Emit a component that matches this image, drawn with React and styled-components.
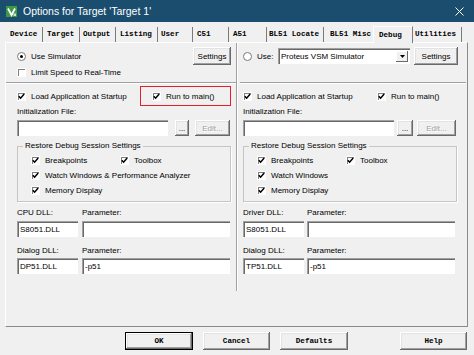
import React from "react"
import styled, { createGlobalStyle, css } from "styled-components"

const GlobalStyle = createGlobalStyle`
  body {
    margin: 0;
    background: #f0f0f0;
    font-family: "Liberation Sans", Arial, sans-serif;
    font-size: 8px;
    color: #000;
  }
`

const Window = styled.div`
  width: 474px;
  height: 355px;
  background: #f0f0f0;
  display: flex;
  flex-direction: column;
  overflow: hidden;
`

const TitleBar = styled.div`
  height: 22px;
  background: #1b4e6e;
  display: flex;
  align-items: center;
  padding: 0 10px 0 6px;
  color: #fff;
`

const Title = styled.span`
  margin-left: 6px;
  font-size: 10.5px;
  flex: 1;
`

const TabStrip = styled.div`
  height: 20px;
  display: flex;
  align-items: flex-end;
  padding-left: 5px;
`

const Tab = styled.div`
  box-sizing: border-box;
  width: ${p => p.$w}px;
  height: 15px;
  padding-left: ${p => p.$pad}px;
  font-family: "Liberation Mono", "Courier New", monospace;
  font-weight: bold;
  font-size: 7.6px;
  line-height: 15px;
  white-space: nowrap;
  border-right: 1px solid ${p => (p.$beforeActive ? "transparent" : "#7a7a7a")};
  ${p =>
    p.$active &&
    css`
      height: 17px;
      line-height: 17px;
      border-top: 1px solid #fff;
      border-left: 1px solid #fff;
      border-right: 1px solid #7a7a7a;
      margin-bottom: -1px;
      background: #f0f0f0;
      position: relative;
      z-index: 1;
    `}
`

const TabPage = styled.div`
  box-sizing: border-box;
  height: 285px;
  margin: 0 6px 0 5px;
  border-top: 1px solid #fff;
  border-left: 1px solid #fff;
  border-right: 1px solid #8a8a8a;
  border-bottom: 1px solid #8a8a8a;
`

const Columns = styled.div`
  display: grid;
  grid-template-columns: 230px 1fr;
  height: 248px;
`

const Panel = styled.div`
  display: flex;
  flex-direction: column;
  padding: 0 ${p => p.$padRight}px 0 ${p => p.$padLeft}px;
  ${p =>
    p.$divider &&
    css`
      border-left: 1px solid #a0a0a0;
      box-shadow: inset 1px 0 #fff;
    `}
`

const Row = styled.div`
  display: flex;
  align-items: center;
  height: ${p => p.$h}px;
  margin-top: ${p => p.$mt}px;
  gap: ${p => p.$gap || 0}px;
`

const Label = styled.span`
  white-space: nowrap;
  width: ${p => (p.$w ? `${p.$w}px` : "auto")};
  color: ${p => (p.$muted ? "#a0a0a0" : "#000")};
`

const Separator = styled.div`
  height: 1px;
  border-bottom: 1px solid #fff;
  background: #a0a0a0;
  margin: 4px ${p => p.$right}px 0 ${p => p.$left}px;
`

const Button = styled.button`
  box-sizing: border-box;
  width: ${p => p.$w}px;
  height: ${p => p.$h || 18}px;
  padding: 0;
  margin-left: ${p => p.$ml || 0}px;
  background: #f0f0f0;
  border: none;
  box-shadow: inset -1px -1px #696969, inset 1px 1px #fff, inset -2px -2px #a0a0a0, inset 2px 2px #e3e3e3;
  font-family: "Liberation Sans", Arial, sans-serif;
  font-size: 8px;
  color: #000;
  ${p =>
    p.$disabled &&
    css`
      color: #a0a0a0;
      text-shadow: 1px 1px #fff;
    `}
  ${p =>
    p.$mono &&
    css`
      font-family: "Liberation Mono", "Courier New", monospace;
      font-weight: bold;
      font-size: 7.6px;
    `}
  ${p =>
    p.$default &&
    css`
      border: 1px solid #000;
    `}
`

const Field = styled.div`
  box-sizing: border-box;
  width: ${p => p.$w}px;
  height: 16px;
  background: #fff;
  box-shadow: inset 1px 1px #a0a0a0, inset 2px 2px #696969;
  padding: 0 0 0 3px;
  display: flex;
  align-items: center;
  white-space: nowrap;
  overflow: hidden;
  flex: none;
`

const Combo = styled(Field)`
  justify-content: space-between;
  padding-right: 2px;
`

const ComboArrow = styled.span`
  width: 12px;
  height: 11px;
  background: #f0f0f0;
  box-shadow: inset -1px -1px #696969, inset 1px 1px #fff;
  display: flex;
  align-items: center;
  justify-content: center;
`

const Box = styled.span`
  box-sizing: border-box;
  width: 9px;
  height: 9px;
  background: #fff;
  box-shadow: inset 1px 1px #808080, inset -1px -1px #fff;
  border: 1px solid transparent;
  display: inline-flex;
  align-items: center;
  justify-content: center;
  margin-right: 5px;
  flex: none;
  ${p =>
    p.$round &&
    css`
      border-radius: 50%;
      border: 1px solid #7a7a7a;
      box-shadow: none;
    `}
`

const Dot = styled.span`
  width: 3px;
  height: 3px;
  border-radius: 50%;
  background: #000;
`

const Item = styled.label`
  display: flex;
  align-items: center;
  white-space: nowrap;
  width: ${p => (p.$w ? `${p.$w}px` : "auto")};
  flex: none;
`

const Highlight = styled.div`
  box-sizing: border-box;
  display: flex;
  align-items: center;
  height: 20px;
  width: 91px;
  padding-left: 11px;
  border: 1.5px solid #e0202a;
`

const Group = styled.fieldset`
  box-sizing: border-box;
  width: 214px;
  margin: 5px 0 0 0;
  padding: 2px 0 3px 0;
  border: 1px solid #c5c5c5;
  box-shadow: 1px 1px #fff;
  min-width: 0;
`

const Legend = styled.legend`
  padding: 0 2px;
  margin-left: 5px;
  line-height: 10px;
`

const GroupGrid = styled.div`
  display: grid;
  grid-template-columns: 89px auto;
  grid-auto-rows: 15px;
  align-items: center;
  padding-left: 13px;
`

const ButtonRow = styled.div`
  display: flex;
  align-items: center;
  margin-top: 5px;
  padding: 0 7px 0 125px;
  gap: 10px;
`

const Spacer = styled.div`
  flex: 1;
`

const Check = () => (
  <svg width="7" height="7" viewBox="0 0 7 7">
    <path d="M0.8 3.2 L2.6 5.2 L6.2 1" stroke="#000" strokeWidth="1.5" fill="none" />
  </svg>
)

const CheckItem = ({ children, w }) => (
  <Item $w={w}>
    <Box>
      <Check />
    </Box>
    <Label>{children}</Label>
  </Item>
)

const RadioItem = ({ children, on, w }) => (
  <Item $w={w}>
    <Box $round>{on && <Dot />}</Box>
    <Label>{children}</Label>
  </Item>
)

const AppIcon = () => (
  <svg width="11" height="11" viewBox="0 0 11 11">
    <rect width="11" height="11" fill="#3b9a43" />
    <path d="M2 2.5 L5.5 9 L9 2.5" stroke="#fff" strokeWidth="1.8" fill="none" />
    <rect x="7.5" y="7.5" width="2.5" height="2.5" fill="#c8e6c9" />
  </svg>
)

const CloseIcon = () => (
  <svg width="9" height="9" viewBox="0 0 9 9">
    <path d="M0.5 0.5 L8.5 8.5 M8.5 0.5 L0.5 8.5" stroke="#fff" strokeWidth="1" />
  </svg>
)

const tabs = [
  { label: "Device", w: 38, pad: 5 },
  { label: "Target", w: 37, pad: 4 },
  { label: "Output", w: 36, pad: 3 },
  { label: "Listing", w: 42, pad: 4 },
  { label: "User", w: 35, pad: 3 },
  { label: "C51", w: 36, pad: 4 },
  { label: "A51", w: 38, pad: 4 },
  { label: "BL51 Locate", w: 57, pad: 2 },
  { label: "BL51 Misc", w: 49, pad: 6 },
  { label: "Debug", w: 40, pad: 5, active: true },
  { label: "Utilities", w: 49, pad: 2 },
]

const panels = [
  {
    padLeft: 11,
    padRight: 5,
    sepLeft: -11,
    sepRight: -5,
    simulator: true,
    runAt: 123,
    fileW: 151,
    dotsW: 14,
    editW: 35,
    fileGaps: [7, 6],
    watch: "Watch Windows & Performance Analyzer",
    dllLabel: "CPU DLL:",
    dll: "S8051.DLL",
    dialog: "DP51.DLL",
    dllGap: 4,
  },
  {
    padLeft: 6,
    padRight: 9,
    sepLeft: -3,
    sepRight: -8,
    simulator: false,
    runAt: 134,
    fileW: 151,
    dotsW: 16,
    editW: 39,
    fileGaps: [3, 4],
    watch: "Watch Windows",
    dllLabel: "Driver DLL:",
    dll: "S8051.DLL",
    dialog: "TP51.DLL",
    dllGap: 3,
  },
]

const DebugPanel = ({ cfg, divider }) => (
  <Panel $padLeft={cfg.padLeft} $padRight={cfg.padRight} $divider={divider}>
    {cfg.simulator ? (
      <Row $h={18} $mt={4}>
        <RadioItem on>Use Simulator</RadioItem>
        <Spacer />
        <Button $w={38}>Settings</Button>
      </Row>
    ) : (
      <Row $h={18} $mt={4}>
        <RadioItem w={35}>Use:</RadioItem>
        <Combo $w={132}>
          <span>Proteus VSM Simulator</span>
          <ComboArrow>
            <svg width="5" height="3" viewBox="0 0 5 3">
              <path d="M0 0 L5 0 L2.5 3 Z" fill="#000" />
            </svg>
          </ComboArrow>
        </Combo>
        <Button $w={44} $ml={4}>
          Settings
        </Button>
      </Row>
    )}
    <Row $h={12} $mt={1}>
      {cfg.simulator && (
        <Item>
          <Box />
          <Label>Limit Speed to Real-Time</Label>
        </Item>
      )}
    </Row>
    <Separator $left={cfg.sepLeft} $right={cfg.sepRight} />
    <Row $h={18} $mt={3}>
      <CheckItem w={cfg.runAt}>Load Application at Startup</CheckItem>
      {cfg.simulator ? (
        <Highlight>
          <CheckItem>Run to main()</CheckItem>
        </Highlight>
      ) : (
        <CheckItem>Run to main()</CheckItem>
      )}
    </Row>
    <Row $h={10} $mt={1}>
      <Label>Initialization File:</Label>
    </Row>
    <Row $h={16} $mt={4}>
      <Field $w={cfg.fileW} />
      <Button $w={cfg.dotsW} $h={16} $ml={cfg.fileGaps[0]}>
        ...
      </Button>
      <Button $w={cfg.editW} $h={16} $ml={cfg.fileGaps[1]} $disabled>
        Edit...
      </Button>
    </Row>
    <Group>
      <Legend>Restore Debug Session Settings</Legend>
      <GroupGrid>
        <CheckItem>Breakpoints</CheckItem>
        <CheckItem>Toolbox</CheckItem>
        <CheckItem>{cfg.watch}</CheckItem>
        <span />
        <CheckItem>Memory Display</CheckItem>
      </GroupGrid>
    </Group>
    <Row $h={10} $mt={5} $gap={cfg.dllGap}>
      <Label $w={61}>{cfg.dllLabel}</Label>
      <Label>Parameter:</Label>
    </Row>
    <Row $h={16} $mt={4} $gap={cfg.dllGap}>
      <Field $w={61}>{cfg.dll}</Field>
      <Field $w={148} />
    </Row>
    <Row $h={10} $mt={8} $gap={cfg.dllGap}>
      <Label $w={61}>Dialog DLL:</Label>
      <Label>Parameter:</Label>
    </Row>
    <Row $h={16} $mt={3} $gap={cfg.dllGap}>
      <Field $w={61}>{cfg.dialog}</Field>
      <Field $w={148}>-p51</Field>
    </Row>
  </Panel>
)

export default function App() {
  const activeIndex = tabs.findIndex(t => t.active)
  return (
    <Window>
      <GlobalStyle />
      <TitleBar>
        <AppIcon />
        <Title>Options for Target 'Target 1'</Title>
        <CloseIcon />
      </TitleBar>
      <TabStrip>
        {tabs.map((t, i) => (
          <Tab
            key={t.label}
            $w={t.w}
            $pad={t.pad}
            $active={t.active}
            $beforeActive={i === activeIndex - 1}
          >
            {t.label}
          </Tab>
        ))}
      </TabStrip>
      <TabPage>
        <Columns>
          <DebugPanel cfg={panels[0]} />
          <DebugPanel cfg={panels[1]} divider />
        </Columns>
      </TabPage>
      <ButtonRow>
        <Button $w={68} $mono $default>
          OK
        </Button>
        <Button $w={67} $mono>
          Cancel
        </Button>
        <Button $w={68} $mono>
          Defaults
        </Button>
        <Spacer />
        <Button $w={67} $mono>
          Help
        </Button>
      </ButtonRow>
    </Window>
  )
}
